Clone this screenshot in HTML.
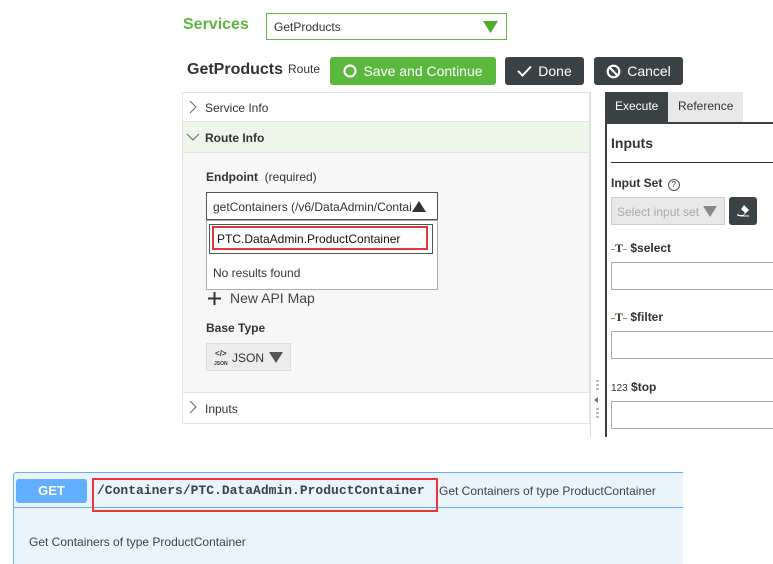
<!DOCTYPE html>
<html><head><meta charset="utf-8"><style>
*{box-sizing:border-box;margin:0;padding:0}
body{width:773px;height:564px;background:#fff;font-family:"Liberation Sans",Arial,sans-serif;color:#333;position:relative;overflow:hidden}
.a{position:absolute}
.btn{position:absolute;border-radius:3px;color:#fff;font-size:14px;display:flex;align-items:center;justify-content:center;gap:6px}
.lbl{font-size:12px;font-weight:bold;color:#333}
.inp{position:absolute;left:611px;width:170px;height:28px;border:1px solid #aaa;background:#fff}
.t{font-family:"Liberation Serif",serif;font-size:12px;color:#333}
.t i{display:inline-block;width:4px;height:1px;background:#5cb83c;vertical-align:middle;font-style:normal}
</style></head><body>
<div class="a" style="left:183px;top:16px;font-size:16px;font-weight:bold;color:#5cb83c">Services</div>
<div class="a" style="left:266px;top:13px;width:241px;height:27px;border:1px solid #5cb83c;font-size:12px;padding:6px 0 0 7px">GetProducts
<svg class="a" style="left:216px;top:7px" width="15" height="12"><path d="M0 0H15L7.5 12Z" fill="#4caf2a"/></svg></div>

<div class="a" style="left:187px;top:61px;font-size:16px;font-weight:bold">GetProducts</div>
<div class="a" style="left:288px;top:62px;font-size:12px">Route</div>
<div class="btn" style="left:330px;top:57px;width:166px;height:28px;background:#5cb83c"><svg width="14" height="14"><circle cx="7" cy="7" r="5.5" fill="none" stroke="#fff" stroke-width="2.2"/></svg>Save and Continue</div>
<div class="btn" style="left:505px;top:57px;width:79px;height:28px;background:#3b4245"><svg width="15" height="12"><path d="M1 6L5.5 10.5L14 1.5" fill="none" stroke="#fff" stroke-width="2"/></svg>Done</div>
<div class="btn" style="left:594px;top:57px;width:89px;height:28px;background:#3b4245"><svg width="15" height="15"><circle cx="7.5" cy="7.5" r="5.8" fill="none" stroke="#fff" stroke-width="2.2"/><path d="M3.5 3.5L11.5 11.5" stroke="#fff" stroke-width="2.2"/></svg>Cancel</div>

<div class="a" style="left:182px;top:92px;width:408px;height:332px;border:1px solid #e3e3e3;background:#f7f7f7"></div>
<div class="a" style="left:183px;top:93px;width:406px;height:29px;background:#fff;border-bottom:1px solid #e3e3e3;font-size:12px;padding:8px 0 0 22px">Service Info</div>
<svg class="a" style="left:189px;top:100px" width="8" height="14"><path d="M1 1L7 7L1 13" fill="none" stroke="#666"/></svg>
<div class="a" style="left:183px;top:122px;width:406px;height:31px;background:#eef6ea;border-bottom:1px solid #e3e3e3;font-size:12px;font-weight:bold;padding:9px 0 0 22px">Route Info</div>
<svg class="a" style="left:186px;top:133px" width="14" height="8"><path d="M1 1L7 7L13 1" fill="none" stroke="#666"/></svg>
<div class="a" style="left:206px;top:170px;font-size:12px"><b>Endpoint</b>&nbsp; (required)</div>
<div class="a" style="left:206px;top:192px;width:232px;height:28px;border:1px solid #555;background:#fff;font-size:12px;padding:7px 0 0 6px;white-space:nowrap;overflow:hidden">getContainers (/v6/DataAdmin/Contai
<svg class="a" style="left:205px;top:8px" width="14" height="11"><path d="M0 11H14L7 0Z" fill="#333"/></svg></div>
<div class="a" style="left:206px;top:220px;width:232px;height:70px;border:1px solid #aaa;background:#fff"></div>
<div class="a" style="left:209px;top:224px;width:224px;height:30px;border:1px solid #555"></div>
<div class="a" style="left:212px;top:226px;width:216px;height:24px;border:2px solid #e8373a;font-size:12px;padding:4px 0 0 3px;color:#111">PTC.DataAdmin.ProductContainer</div>
<div class="a" style="left:213px;top:266px;font-size:12px">No results found</div>
<svg class="a" style="left:207px;top:291px" width="15" height="15"><path d="M7.5 1V14M1 7.5H14" stroke="#333" stroke-width="2"/></svg>
<div class="a" style="left:230px;top:290px;font-size:14px;color:#444">New API Map</div>
<div class="a lbl" style="left:206px;top:321px">Base Type</div>
<div class="a" style="left:206px;top:343px;width:85px;height:28px;border:1px solid #ddd;background:#ececec">
<div class="a" style="left:7px;top:5px;font-size:8px;font-weight:bold;line-height:9px;text-align:center">&lt;/&gt;<br><span style="font-size:5px">JSON</span></div>
<div class="a" style="left:25px;top:7px;font-size:12px">JSON</div>
<svg class="a" style="left:62px;top:8px" width="14" height="11"><path d="M0 0H14L7 11Z" fill="#555"/></svg></div>
<div class="a" style="left:183px;top:392px;width:406px;height:31px;background:#fff;border-top:1px solid #e3e3e3;font-size:12px;padding:9px 0 0 22px">Inputs</div>
<svg class="a" style="left:189px;top:400px" width="8" height="14"><path d="M1 1L7 7L1 13" fill="none" stroke="#666"/></svg>

<div class="a" style="left:590px;top:92px;width:1px;height:345px;background:#ddd"></div>
<div class="a" style="left:596px;top:380px;width:3px;height:12px;background:repeating-linear-gradient(#bbb 0 2px,transparent 2px 4px)"></div>
<svg class="a" style="left:594px;top:397px" width="5" height="6"><path d="M4 0V6L0 3Z" fill="#777"/></svg>
<div class="a" style="left:596px;top:408px;width:3px;height:12px;background:repeating-linear-gradient(#bbb 0 2px,transparent 2px 4px)"></div>

<div class="a" style="left:605px;top:92px;width:63px;height:30px;background:#3b4245;color:#fff;font-size:12px;padding:7px 0 0 10px">Execute</div>
<div class="a" style="left:668px;top:92px;width:75px;height:30px;background:#e8e8e8;font-size:12px;padding:7px 0 0 10px">Reference</div>
<div class="a" style="left:605px;top:122px;width:168px;height:2px;background:#3b4245"></div>
<div class="a" style="left:605px;top:122px;width:2px;height:315px;background:#3b4245"></div>
<div class="a" style="left:611px;top:135px;font-size:14px;font-weight:bold">Inputs</div>
<div class="a" style="left:611px;top:162px;width:162px;height:1px;background:#333"></div>
<div class="a lbl" style="left:611px;top:176px">Input Set <span style="display:inline-block;width:12px;height:12px;border:1px solid #555;border-radius:50%;font-size:8px;text-align:center;line-height:10px;font-weight:normal;margin-left:2px">?</span></div>
<div class="a" style="left:611px;top:197px;width:114px;height:28px;background:#e8e8e8;border:1px solid #ccc;font-size:12px;color:#aaa;padding:7px 0 0 5px">Select input set
<svg class="a" style="left:91px;top:8px" width="14" height="11"><path d="M0 0H14L7 11Z" fill="#888"/></svg></div>
<div class="a" style="left:729px;top:197px;width:28px;height:28px;background:#3b4245;border-radius:3px">
<svg class="a" style="left:7px;top:7px" width="14" height="14"><path d="M8 1L13 6L7 12H2L1 11L8 1Z" fill="#fff"/><path d="M4 12H13" stroke="#fff"/><path d="M5 5L9 9L7 11H3L2 10Z" fill="#3b4245"/></svg></div>
<div class="a lbl" style="left:611px;top:241px"><span class="t"><i></i>T<i></i></span> $select</div>
<div class="inp" style="top:262px"></div>
<div class="a lbl" style="left:611px;top:310px"><span class="t"><i></i>T<i></i></span> $filter</div>
<div class="inp" style="top:331px"></div>
<div class="a lbl" style="left:611px;top:380px"><span style="font-size:10px;font-weight:normal">123</span> $top</div>
<div class="inp" style="top:401px"></div>

<div class="a" style="left:13px;top:472px;width:670px;height:92px;border:1px solid #61affe;border-right:none;border-bottom:none;background:#ebf3fb;border-radius:3px 0 0 0"></div>
<div class="a" style="left:14px;top:507px;width:669px;height:1px;background:#61affe"></div>
<div class="a" style="left:16px;top:479px;width:71px;height:24px;background:#61affe;border-radius:3px;color:#fff;font-size:13px;font-weight:bold;text-align:center;line-height:24px">GET</div>
<div class="a" style="left:97px;top:483px;font-family:'Liberation Mono',monospace;font-size:13px;font-weight:bold;color:#3b4151">/Containers/PTC.DataAdmin.ProductContainer</div>
<div class="a" style="left:92px;top:478px;width:346px;height:34px;border:2px solid #e8373a"></div>
<div class="a" style="left:439px;top:484px;font-size:12px;color:#3b4151">Get Containers of type ProductContainer</div>
<div class="a" style="left:29px;top:535px;font-size:12px;color:#3b4151">Get Containers of type ProductContainer</div>
</body></html>
